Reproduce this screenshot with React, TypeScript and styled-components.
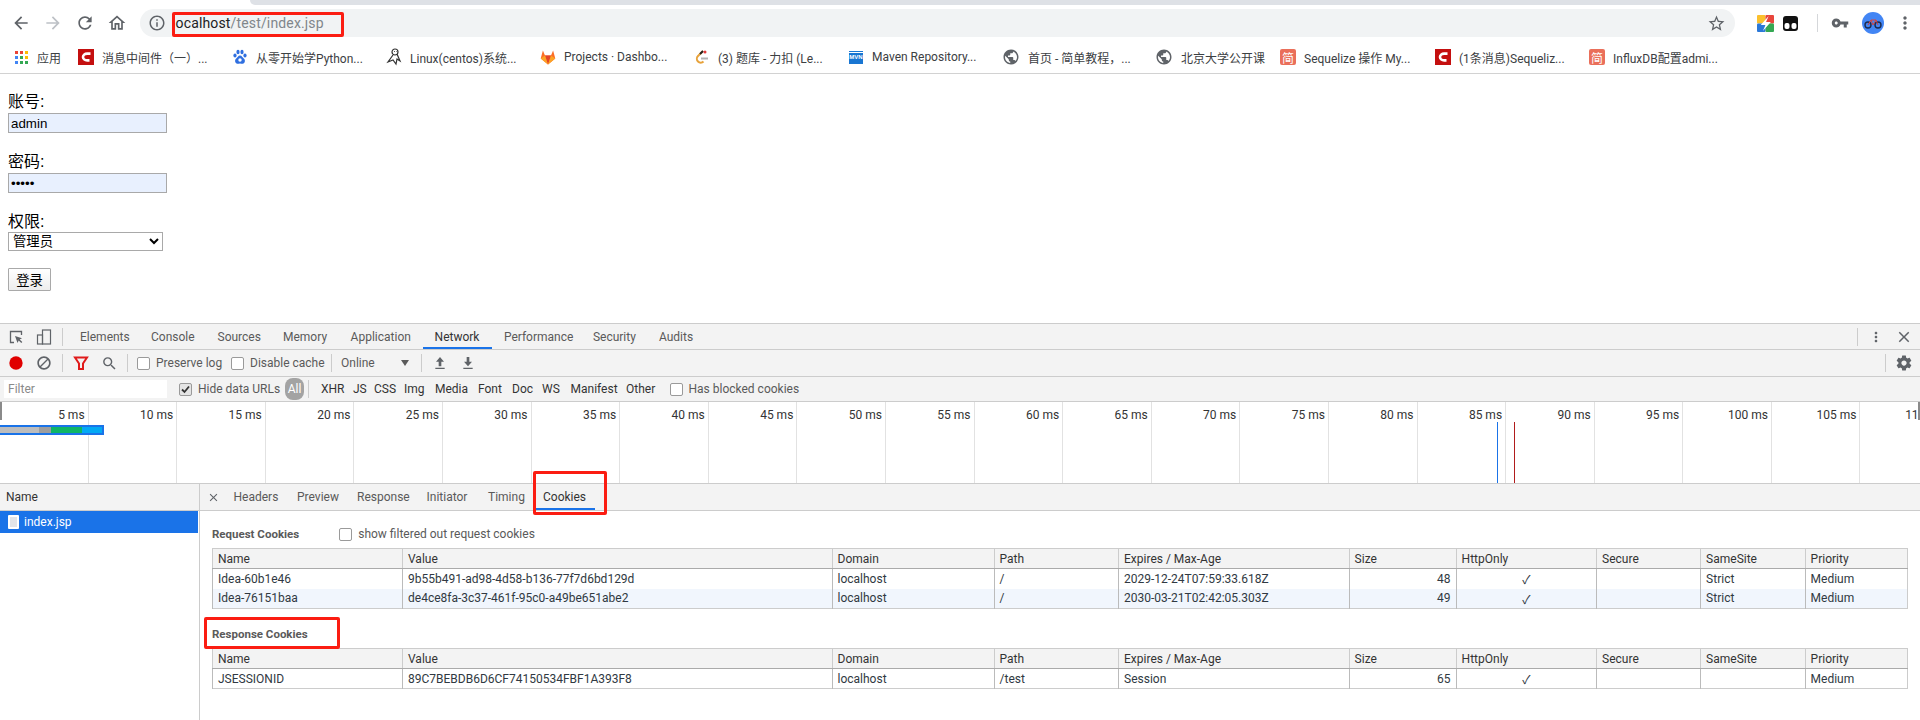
import React from "react";
import styled, { createGlobalStyle } from "styled-components";

const UI_FONT = `Roboto, "Noto Sans CJK SC", sans-serif`;

const paths = {
  back: "M20 11H7.83l5.59-5.59L12 4l-8 8 8 8 1.41-1.41L7.83 13H20v-2z",
  forward: "M12 4l-1.41 1.41L16.17 11H4v2h12.17l-5.58 5.59L12 20l8-8z",
  reload:
    "M17.65 6.35C16.2 4.9 14.21 4 12 4c-4.42 0-7.99 3.58-7.99 8s3.57 8 7.99 8c3.73 0 6.84-2.55 7.73-6h-2.08c-.82 2.33-3.04 4-5.65 4-3.31 0-6-2.69-6-6s2.69-6 6-6c1.66 0 3.14.69 4.22 1.78L13 11h7V4l-2.35 2.35z",
  home: "M12 5.69l5 4.5V18h-2v-6H9v6H7v-7.81l5-4.5M12 3L2 12h3v8h6v-6h2v6h6v-8h3L12 3z",
  info: "M11 7h2v2h-2zm0 4h2v6h-2zm1-9C6.48 2 2 6.48 2 12s4.48 10 10 10 10-4.48 10-10S17.52 2 12 2zm0 18c-4.41 0-8-3.59-8-8s3.59-8 8-8 8 3.59 8 8-3.59 8-8 8z",
  star: "M22 9.24l-7.19-.62L12 2 9.19 8.63 2 9.24l5.46 4.73L5.82 21 12 17.27 18.18 21l-1.63-7.03L22 9.24zM12 15.4l-3.76 2.27 1-4.28-3.32-2.88 4.38-.38L12 6.1l1.71 4.04 4.38.38-3.32 2.88 1 4.28L12 15.4z",
  key: "M12.65 10C11.83 7.67 9.61 6 7 6c-3.31 0-6 2.69-6 6s2.69 6 6 6c2.61 0 4.83-1.67 5.65-4H17v4h4v-4h2v-4H12.65zM7 14c-1.1 0-2-.9-2-2s.9-2 2-2 2 .9 2 2-.9 2-2 2z",
  more: "M12 8c1.1 0 2-.9 2-2s-.9-2-2-2-2 .9-2 2 .9 2 2 2zm0 2c-1.1 0-2 .9-2 2s.9 2 2 2 2-.9 2-2-.9-2-2-2zm0 6c-1.1 0-2 .9-2 2s.9 2 2 2 2-.9 2-2-.9-2-2-2z",
  gear: "M19.43 12.98c.04-.32.07-.64.07-.98s-.03-.66-.07-.98l2.11-1.65c.19-.15.24-.42.12-.64l-2-3.46c-.12-.22-.39-.3-.61-.22l-2.49 1c-.52-.4-1.08-.73-1.69-.98l-.38-2.65C14.46 2.18 14.25 2 14 2h-4c-.25 0-.46.18-.49.42l-.38 2.65c-.61.25-1.17.59-1.69.98l-2.49-1c-.23-.09-.49 0-.61.22l-2 3.46c-.13.22-.07.49.12.64l2.11 1.65c-.04.32-.07.65-.07.98s.03.66.07.98l-2.11 1.65c-.19.15-.24.42-.12.64l2 3.46c.12.22.39.3.61.22l2.49-1c.52.4 1.08.73 1.69.98l.38 2.65c.03.24.24.42.49.42h4c.25 0 .46-.18.49-.42l.38-2.65c.61-.25 1.17-.59 1.69-.98l2.49 1c.23.09.49 0 .61-.22l2-3.46c.12-.22.07-.49-.12-.64l-2.11-1.65zM12 15.5c-1.93 0-3.5-1.57-3.5-3.5s1.57-3.5 3.5-3.5 3.5 1.57 3.5 3.5-1.57 3.5-3.5 3.5z",
  globe:
    "M12 2C6.48 2 2 6.48 2 12s4.48 10 10 10 10-4.48 10-10S17.52 2 12 2zm-1 17.93c-3.95-.49-7-3.85-7-7.93 0-.62.08-1.21.21-1.79L9 15v1c0 1.1.9 2 2 2v1.93zm6.9-2.54c-.26-.81-1-1.39-1.9-1.39h-1v-3c0-.55-.45-1-1-1H8v-2h2c.55 0 1-.45 1-1V7h2c1.1 0 2-.9 2-2v-.41c2.93 1.19 5 4.06 5 7.41 0 2.08-.8 3.97-2.1 5.39z",
  clear:
    "M12 2C6.48 2 2 6.48 2 12s4.48 10 10 10 10-4.48 10-10S17.52 2 12 2zM4.5 12c0-4.14 3.36-7.5 7.5-7.5 1.7 0 3.27.57 4.53 1.52L6.02 16.53A7.46 7.46 0 014.5 12zm7.5 7.5c-1.7 0-3.27-.57-4.53-1.52L17.98 7.47A7.46 7.46 0 0119.5 12c0 4.14-3.36 7.5-7.5 7.5z",
  up: "M12 3l-6 7h4v7h4v-7h4zM5 19h14v2H5z",
  down: "M10 3v7H6l6 7 6-7h-4V3zM5 19h14v2H5z",
  close:
    "M19 6.41L17.59 5 12 10.59 6.41 5 5 6.41 10.59 12 5 17.59 6.41 19 12 13.41 17.59 19 19 17.59 13.41 12z",
  search:
    "M15.5 14h-.79l-.28-.27A6.47 6.47 0 0016 9.5 6.5 6.5 0 109.5 16c1.61 0 3.09-.59 4.23-1.57l.27.28v.79l5 4.99L20.49 19l-4.99-5zm-6 0C7.01 14 5 11.99 5 9.5S7.01 5 9.5 5 14 7.01 14 9.5 11.99 14 9.5 14z",
};

const Glyph = ({ d, size = 20, color = "#5f6368" }: { d: string; size?: number; color?: string }) => (
  <svg width={size} height={size} viewBox="0 0 24 24" fill={color}>
    <path d={d} />
  </svg>
);

const AppsIcon = () => {
  const colors = ["#ea4335", "#ea4335", "#fbbc05", "#4285f4", "#34a853", "#fbbc05", "#4285f4", "#34a853", "#34a853"];
  return (
    <svg width="16" height="16" viewBox="0 0 16 16">
      {colors.map((c, i) => (
        <rect key={i} x={2 + (i % 3) * 5} y={2 + Math.floor(i / 3) * 5} width="3" height="3" fill={c} />
      ))}
    </svg>
  );
};

const CsdnIcon = () => (
  <svg width="16" height="16" viewBox="0 0 16 16">
    <rect width="16" height="16" fill="#c40f0f" />
    <path d="M12.5 4.6H9.2C6.6 4.6 5 6.200 5 8s1.600 3.400 4.200 3.400h2.300" fill="none" stroke="#fff" strokeWidth="2.600" />
  </svg>
);

const BaiduIcon = () => (
  <svg width="16" height="16" viewBox="0 0 16 16" fill="#2f6fe0">
    <ellipse cx="3" cy="6.500" rx="1.600" ry="2" />
    <ellipse cx="6" cy="3" rx="1.600" ry="2.200" />
    <ellipse cx="10" cy="3" rx="1.600" ry="2.200" />
    <ellipse cx="13" cy="6.500" rx="1.600" ry="2" />
    <path d="M8 6.500c-2 0-2.400 2-3.800 3C3 10.500 2.800 12 3.500 13.500 4.300 15 6 15 8 14.500c2 .5 3.700.5 4.500-1 .7-1.500.5-3-.7-4-1.400-1-1.800-3-3.800-3z" />
    <circle cx="8" cy="11" r="1.700" fill="#fff" />
  </svg>
);

const LinuxIcon = () => (
  <svg width="16" height="18" viewBox="0 0 16 18" fill="none" stroke="#333" strokeWidth="1.200">
    <circle cx="9" cy="4" r="3" />
    <path d="M7 7L2 14l5-2 3 4 1-5 3 2-3-7" />
    <path d="M8 3.500h.8M10 3.500h.5" />
  </svg>
);

const GitlabIcon = () => (
  <svg width="16" height="16" viewBox="0 0 16 16">
    <path d="M8 15.500L.7 9.600 2.900 1.500 5 6.500h6l2.100-5 2.200 8.100z" fill="#fc6d26" />
    <path d="M8 15.500L5 6.500h6z" fill="#e24329" />
    <path d="M8 15.500L.7 9.600 5 6.500zM8 15.500l7.300-5.900L11 6.500z" fill="#fca326" />
  </svg>
);

const LeetIcon = () => (
  <svg width="16" height="16" viewBox="0 0 16 16" fill="none" strokeWidth="2">
    <path d="M9 2L4 7c-1.500 1.500-1.500 4 0 5.500s4 1.500 5.500 0" stroke="#e7a23b" />
    <path d="M7 9.500h7" stroke="#b3b3b3" />
    <path d="M9 2L6 5" stroke="#222" />
    <circle cx="11" cy="3" r="1.500" fill="#e23b3b" stroke="none" />
  </svg>
);

const BoltIcon = () => (
  <svg width="17" height="17" viewBox="0 0 16 16">
    <rect width="8" height="8" fill="#fbc02d" rx="1" />
    <rect x="8" width="8" height="8" fill="#e8453c" rx="1" />
    <rect y="8" width="8" height="8" fill="#2b78d8" rx="1" />
    <rect x="8" y="8" width="8" height="8" fill="#34a853" rx="1" />
    <path d="M11 1L3.500 9.500H8L5.500 15 13 6.500H8.500z" fill="#fff" />
  </svg>
);

const MonkeyIcon = () => (
  <svg width="15" height="15" viewBox="0 0 15 15">
    <rect width="15" height="15" rx="3" fill="#111" />
    <rect x="1.500" y="7" width="5" height="6" rx="2" fill="#fff" />
    <rect x="8.500" y="7" width="5" height="6" rx="2" fill="#fff" />
  </svg>
);

const BikeIcon = () => (
  <svg width="18" height="12" viewBox="0 0 18 12" fill="none" stroke="#1d2b4f" strokeWidth="1.400">
    <circle cx="4" cy="8" r="3" />
    <circle cx="14" cy="8" r="3" />
    <path d="M4 8l3-5h5l2 5M7 3l2 5 3-5" stroke="#d9423a" strokeWidth="1" />
  </svg>
);

const InspectIcon = () => (
  <svg width="16" height="16" viewBox="0 0 16 16" fill="none" stroke="#5f6368" strokeWidth="1.300">
    <path d="M6 13.500H2.500v-11h11V6" />
    <path d="M7 7l2.500 7 1.200-2.600 2.600 2.600 1-1-2.600-2.600L14 9.300z" fill="#5f6368" stroke="none" />
  </svg>
);

const DeviceIcon = () => (
  <svg width="16" height="16" viewBox="0 0 16 16" fill="none" stroke="#5f6368" strokeWidth="1.200">
    <rect x="6.500" y="1" width="8" height="14" />
    <rect x="1.500" y="6" width="5" height="9" />
  </svg>
);

const FilterIcon = () => (
  <svg width="16" height="16" viewBox="0 0 16 16" fill="none" stroke="#e01b1b" strokeWidth="2">
    <path d="M2 2.500h12L10 8.500v5.500H6V8.500z" />
  </svg>
);

const FileIcon = () => (
  <svg width="11" height="14" viewBox="0 0 11 14">
    <rect width="11" height="14" rx="1" fill="#fff" />
    <path d="M2 3h7M2 5h7M2 7h7M2 9h7M2 11h7" stroke="#c4c9d2" strokeWidth="1" />
  </svg>
);

const GlobalStyle = createGlobalStyle`
  html, body {
    margin: 0;
    width: 1920px;
    height: 720px;
    overflow: hidden;
    background: #fff;
  }
  * {
    box-sizing: border-box;
  }
`;

const Screen = styled.div`
  position: relative;
  display: flex;
  flex-direction: column;
  width: 1920px;
  height: 720px;
  overflow: hidden;
  font-family: ${UI_FONT};
  font-size: 12px;
  color: #303942;
`;

const TabStrip = styled.div`
  height: 5px;
  padding-left: 250px;
  background: #fff;
`;

const TabStripFill = styled.div`
  height: 100%;
  background: #dee1e6;
  border-bottom-left-radius: 5px;
`;

const ChromeBar = styled.div`
  display: flex;
  align-items: center;
  height: 36px;
  padding: 4px 0 4px 5px;
`;

const NavButton = styled.div`
  display: flex;
  align-items: center;
  justify-content: center;
  flex: 0 0 32px;
  height: 28px;
`;

const Omnibox = styled.div`
  display: flex;
  align-items: center;
  width: 1595px;
  height: 28px;
  margin-left: 7px;
  padding: 0 9px 0 8px;
  background: #f1f3f4;
  border-radius: 14px;
`;

const Url = styled.div`
  flex: 1;
  margin-left: 6px;
  font-size: 14px;
  letter-spacing: 0.15px;
  color: #80868b;
`;

const UrlHost = styled.span`
  color: #202124;
`;

const ExtButton = styled.div<{ $w: number }>`
  display: flex;
  align-items: center;
  justify-content: center;
  flex: 0 0 ${(p) => p.$w}px;
  height: 28px;
`;

const BarDivider = styled.div`
  width: 1px;
  height: 18px;
  background: #d5d7da;
`;

const Avatar = styled.div`
  display: flex;
  align-items: center;
  justify-content: center;
  width: 22px;
  height: 22px;
  border-radius: 50%;
  background: #4285f4;
`;

const Bookmarks = styled.div`
  display: flex;
  align-items: center;
  height: 33px;
  padding-left: 13px;
  border-bottom: 1px solid #d2d2d2;
`;

const Bookmark = styled.div<{ $w: number }>`
  display: flex;
  align-items: center;
  gap: 8px;
  flex: 0 0 ${(p) => p.$w}px;
  font-size: 12px;
  color: #3c4043;
  white-space: nowrap;
  overflow: hidden;
`;

const BookmarkIcon = styled.span`
  display: flex;
  align-items: center;
  justify-content: center;
  flex: 0 0 16px;
  height: 18px;
`;

const MvnBadge = styled.span`
  display: flex;
  align-items: center;
  justify-content: center;
  width: 14px;
  height: 13px;
  border-top: 1px solid #1976d2;
  border-bottom: 1px solid #1976d2;
  font-family: "Liberation Sans", sans-serif;
  font-size: 6px;
  font-weight: 700;
  color: #fff;
  background: linear-gradient(#fff 1px, #1976d2 1px, #1976d2 11px, #fff 11px);
`;

const JianBadge = styled.span`
  display: flex;
  align-items: center;
  justify-content: center;
  width: 16px;
  height: 16px;
  border-radius: 2px;
  background: #ea6f5a;
  color: #fff;
  font-size: 12px;
`;

const MoreBookmarks = styled.svg`
  margin-left: 279px;
`;

const Page = styled.div`
  height: 249px;
  padding: 17px 0 0 8px;
  font-family: "Liberation Sans", "Noto Sans CJK SC", sans-serif;
  color: #000;
`;

const FieldLabel = styled.label`
  display: block;
  height: 22px;
  font-size: 16px;
  line-height: 22px;
`;

const TextInput = styled.input`
  display: block;
  width: 159px;
  height: 20px;
  margin: 0 0 18px;
  padding: 1px 2px;
  border: 1px solid #a9a9a9;
  border-radius: 0;
  background: #e8f0fe;
  font-family: "Liberation Sans", sans-serif;
  font-size: 13.33px;
  color: #000;
  outline: none;
`;

const RoleSelect = styled.select`
  display: block;
  width: 155px;
  height: 19px;
  margin-top: -1px;
  padding: 0;
  border: 1px solid #a9a9a9;
  border-radius: 0;
  background: #fff;
  font-family: "Liberation Sans", "Noto Sans CJK SC", sans-serif;
  font-size: 13.33px;
  color: #000;
`;

const LoginButton = styled.button`
  display: block;
  width: 43px;
  height: 23px;
  margin-top: 17px;
  padding: 0;
  border: 1px solid #a9a9a9;
  border-radius: 1px;
  background: linear-gradient(#fff, #ededed);
  font-family: "Noto Sans CJK SC", sans-serif;
  font-size: 13.33px;
  color: #000;
`;

const DevTools = styled.div`
  display: flex;
  flex-direction: column;
  flex: 1;
  min-height: 0;
  border-top: 1px solid #ccc;
`;

const ToolRow = styled.div<{ $h: number }>`
  display: flex;
  align-items: center;
  flex: 0 0 ${(p) => p.$h}px;
  padding-left: 2px;
  padding-right: 2.5px;
  background: #f3f3f3;
  border-bottom: 1px solid #ccc;
  color: #5a5a5a;
  white-space: nowrap;
`;

const Slot = styled.div`
  display: flex;
  align-items: center;
  justify-content: center;
  flex: 0 0 28px;
  height: 22px;
`;

const Divider = styled.div<{ $push?: boolean }>`
  flex: 0 0 1px;
  height: 18px;
  margin: 0 4px;
  margin-left: ${(p) => (p.$push ? "auto" : "4px")};
  background: #ccc;
`;

const PanelTab = styled.div<{ $w: number; $active?: boolean }>`
  display: flex;
  align-items: center;
  flex: 0 0 ${(p) => p.$w}px;
  height: 100%;
  padding-left: 12px;
  color: ${(p) => (p.$active ? "#333" : "#5a5a5a")};
  box-shadow: ${(p) => (p.$active ? "inset 0 -2px 0 #1a73e8" : "none")};
`;

const PanelTabs = styled.div`
  display: flex;
  height: 100%;
  margin-left: 1px;
`;

const CheckLabel = styled.label<{ $w: number; $ml?: number }>`
  display: flex;
  align-items: center;
  gap: 6px;
  flex: 0 0 ${(p) => p.$w}px;
  margin-left: ${(p) => p.$ml ?? 5}px;
`;

const Check = styled.span<{ $checked?: boolean }>`
  display: flex;
  align-items: center;
  justify-content: center;
  flex: 0 0 13px;
  height: 13px;
  border: 1px solid #9a9a9a;
  border-radius: 2px;
  background: ${(p) => (p.$checked ? "#e4e4e4" : "#fff")};
`;

const Throttle = styled.div`
  display: flex;
  align-items: center;
  justify-content: space-between;
  flex: 0 0 81px;
  padding: 0 8px 0 5px;
`;

const Caret = styled.span`
  width: 0;
  height: 0;
  border-left: 4px solid transparent;
  border-right: 4px solid transparent;
  border-top: 6px solid #5a5a5a;
`;

const FilterInput = styled.div`
  flex: 0 0 163px;
  height: 18px;
  margin-left: 2px;
  padding-left: 4px;
  background: #fff;
  color: #8a8a8a;
  line-height: 19px;
`;

const AllPill = styled.div`
  flex: 0 0 19px;
  height: 22px;
  border-radius: 8px;
  background: #a3a3a3;
  color: #fff;
  text-align: center;
  line-height: 22px;
`;

const TypeFilter = styled.div<{ $w: number }>`
  flex: 0 0 ${(p) => p.$w}px;
  color: #333;
`;

const TypeFilters = styled.div`
  display: flex;
  margin-left: 8px;
`;

const Overview = styled.div`
  position: relative;
  display: flex;
  flex: 0 0 82px;
  overflow: hidden;
  background: #fff;
  border-bottom: 1px solid #ccc;
`;

const Tick = styled.div`
  flex: 0 0 88.6px;
  padding: 5px 3px 0 0;
  border-right: 1px solid #e2e2e2;
  color: #333;
  line-height: 16px;
  text-align: right;
  white-space: nowrap;
`;

const Handle = styled.div<{ $right?: boolean }>`
  position: absolute;
  top: 0;
  ${(p) => (p.$right ? "right: 0;" : "left: 0;")}
  width: 2px;
  height: 18px;
  background: #8a8a8a;
`;

const RequestBar = styled.div`
  position: absolute;
  top: 23px;
  left: 0;
  display: flex;
  width: 104px;
  height: 10px;
  border: 2px solid #1a73e8;
  border-left: 0;
`;

const BarPart = styled.div<{ $w: number; $color: string }>`
  flex: 0 0 ${(p) => p.$w}px;
  background: ${(p) => p.$color};
`;

const EventLine = styled.div<{ $x: number; $color: string }>`
  position: absolute;
  top: 20px;
  bottom: 0;
  left: ${(p) => p.$x}px;
  width: 1px;
  background: ${(p) => p.$color};
`;

const Panels = styled.div`
  display: flex;
  flex: 1;
  min-height: 0;
`;

const RequestList = styled.div`
  flex: 0 0 200px;
  border-right: 1px solid #ccc;
`;

const ListHead = styled.div`
  display: flex;
  align-items: center;
  height: 27px;
  padding-left: 6px;
  padding-bottom: 1px;
  background: #f3f3f3;
  border-bottom: 1px solid #ccc;
  color: #333;
`;

const ListRow = styled.div`
  display: flex;
  align-items: center;
  gap: 5px;
  height: 22px;
  margin-right: 1px;
  padding-left: 8px;
  background: #1a73e8;
  color: #fff;
`;

const Detail = styled.div`
  flex: 1;
  min-width: 0;
`;

const DetailTabs = styled.div`
  display: flex;
  align-items: center;
  height: 27px;
  background: #f3f3f3;
  border-bottom: 1px solid #ccc;
`;

const CloseSlot = styled.div`
  display: flex;
  align-items: center;
  flex: 0 0 25.5px;
  padding-left: 7px;
`;

const DetailTab = styled.div<{ $w: number; $active?: boolean }>`
  display: flex;
  align-items: center;
  flex: 0 0 ${(p) => p.$w}px;
  height: 100%;
  padding-left: 8px;
  color: ${(p) => (p.$active ? "#333" : "#5a5a5a")};
  box-shadow: ${(p) => (p.$active ? "inset 0 -2px 0 #1a73e8" : "none")};
`;

const CookieBody = styled.div`
  padding: 0 13px 0 12px;
`;

const SectionHead = styled.div<{ $pt: number }>`
  display: flex;
  align-items: center;
  height: 22px;
  margin: ${(p) => p.$pt}px 0 3px;
  font-weight: 700;
  font-size: 11.5px;
  color: #5a5a5a;
`;

const SectionOption = styled.label`
  display: flex;
  align-items: center;
  gap: 6px;
  margin-left: 40px;
  font-weight: 400;
  font-size: 12px;
  color: #5a5a5a;
`;

const CookieTable = styled.table`
  width: 695px;
  width: 100%;
  border: 1px solid #ccc;
  border-collapse: collapse;
  table-layout: fixed;
`;

const HeadCell = styled.th`
  height: 20px;
  padding: 0 5px;
  background: #f3f3f3;
  border-left: 1px solid #ccc;
  border-bottom: 1px solid #aaa;
  font-weight: 400;
  text-align: left;
  color: #333;
`;

const BodyRow = styled.tr<{ $alt?: boolean }>`
  background: ${(p) => (p.$alt ? "#f1f6fd" : "#fff")};
`;

const BodyCell = styled.td<{ $align?: string }>`
  height: 20px;
  padding: 0 5px;
  border-left: 1px solid #bbb;
  text-align: ${(p) => p.$align ?? "left"};
  color: #303942;
  white-space: nowrap;
  overflow: hidden;
`;

const Mark = styled.div<{ $x: number; $y: number; $w: number; $h: number }>`
  position: absolute;
  left: ${(p) => p.$x}px;
  top: ${(p) => p.$y}px;
  width: ${(p) => p.$w}px;
  height: ${(p) => p.$h}px;
  border: 3px solid #fb1d12;
  border-radius: 2px;
  pointer-events: none;
`;

const bookmarks: { label: string; w: number; icon: React.ReactNode }[] = [
  { label: "应用", w: 65, icon: <AppsIcon /> },
  { label: "消息中间件（一）...", w: 154, icon: <CsdnIcon /> },
  { label: "从零开始学Python...", w: 154, icon: <BaiduIcon /> },
  { label: "Linux(centos)系统...", w: 154, icon: <LinuxIcon /> },
  { label: "Projects · Dashbo...", w: 154, icon: <GitlabIcon /> },
  { label: "(3) 题库 - 力扣 (Le...", w: 154, icon: <LeetIcon /> },
  { label: "Maven Repository...", w: 154, icon: <MvnBadge>MVN</MvnBadge> },
  { label: "首页 - 简单教程，...", w: 153, icon: <Glyph d={paths.globe} size={18} /> },
  { label: "北京大学公开课", w: 125, icon: <Glyph d={paths.globe} size={18} /> },
  { label: "Sequelize 操作 My...", w: 155, icon: <JianBadge>简</JianBadge> },
  { label: "(1条消息)Sequeliz...", w: 154, icon: <CsdnIcon /> },
  { label: "InfluxDB配置admi...", w: 154, icon: <JianBadge>简</JianBadge> },
];

const panelTabs = [
  { label: "Elements", w: 71 },
  { label: "Console", w: 66.5 },
  { label: "Sources", w: 65.5 },
  { label: "Memory", w: 67.6 },
  { label: "Application", w: 84 },
  { label: "Network", w: 69.3, active: true },
  { label: "Performance", w: 89 },
  { label: "Security", w: 66 },
  { label: "Audits", w: 60 },
];

const typeFilters = [
  { label: "XHR", w: 32 },
  { label: "JS", w: 21 },
  { label: "CSS", w: 30 },
  { label: "Img", w: 31 },
  { label: "Media", w: 43 },
  { label: "Font", w: 34 },
  { label: "Doc", w: 30 },
  { label: "WS", w: 28.5 },
  { label: "Manifest", w: 55.5 },
  { label: "Other", w: 43.5 },
];

const detailTabs = [
  { label: "Headers", w: 63.5 },
  { label: "Preview", w: 60 },
  { label: "Response", w: 69.5 },
  { label: "Initiator", w: 61.5 },
  { label: "Timing", w: 55 },
  { label: "Cookies", w: 60, active: true },
];

const columns = [
  { label: "Name", w: 190 },
  { label: "Value", w: 429.5 },
  { label: "Domain", w: 162 },
  { label: "Path", w: 124.5 },
  { label: "Expires / Max-Age", w: 230.6 },
  { label: "Size", w: 107, align: "right" },
  { label: "HttpOnly", w: 140.5, align: "center" },
  { label: "Secure", w: 104 },
  { label: "SameSite", w: 104.5 },
  { label: "Priority", w: 102.5 },
];

const requestCookies = [
  ["Idea-60b1e46", "9b55b491-ad98-4d58-b136-77f7d6bd129d", "localhost", "/", "2029-12-24T07:59:33.618Z", "48", "✓", "", "Strict", "Medium"],
  ["Idea-76151baa", "de4ce8fa-3c37-461f-95c0-a49be651abe2", "localhost", "/", "2030-03-21T02:42:05.303Z", "49", "✓", "", "Strict", "Medium"],
];

const responseCookies = [
  ["JSESSIONID", "89C7BEBDB6D6CF74150534FBF1A393F8", "localhost", "/test", "Session", "65", "✓", "", "", "Medium"],
];

const Table = ({ rows }: { rows: string[][] }) => (
  <CookieTable>
    <colgroup>
      {columns.map((c) => (
        <col key={c.label} style={{ width: c.w }} />
      ))}
    </colgroup>
    <thead>
      <tr>
        {columns.map((c) => (
          <HeadCell key={c.label}>{c.label}</HeadCell>
        ))}
      </tr>
    </thead>
    <tbody>
      {rows.map((row, i) => (
        <BodyRow key={row[0]} $alt={i % 2 === 1}>
          {row.map((cell, j) => (
            <BodyCell key={j} $align={columns[j].align}>
              {cell}
            </BodyCell>
          ))}
        </BodyRow>
      ))}
    </tbody>
  </CookieTable>
);

const ticks = Array.from({ length: 22 }, (_, i) => (i + 1) * 5);

export default function App() {
  return (
    <Screen>
      <GlobalStyle />
      <TabStrip>
        <TabStripFill />
      </TabStrip>
      <ChromeBar>
        <NavButton><Glyph d={paths.back} /></NavButton>
        <NavButton><Glyph d={paths.forward} color="#bdc1c6" /></NavButton>
        <NavButton><Glyph d={paths.reload} /></NavButton>
        <NavButton><Glyph d={paths.home} /></NavButton>
        <Omnibox>
          <Glyph d={paths.info} size={18} />
          <Url>
            <UrlHost>localhost</UrlHost>/test/index.jsp
          </Url>
          <Glyph d={paths.star} size={19} />
        </Omnibox>
        <ExtButton $w={22} />
        <ExtButton $w={0}><BoltIcon /></ExtButton>
        <ExtButton $w={32}><MonkeyIcon /></ExtButton>
        <ExtButton $w={23}><BarDivider /></ExtButton>
        <ExtButton $w={22}><Glyph d={paths.key} size={18} /></ExtButton>
        <ExtButton $w={43}><Avatar><BikeIcon /></Avatar></ExtButton>
        <ExtButton $w={22}><Glyph d={paths.more} size={20} /></ExtButton>
      </ChromeBar>
      <Bookmarks>
        {bookmarks.map((b) => (
          <Bookmark key={b.label} $w={b.w}>
            <BookmarkIcon>{b.icon}</BookmarkIcon>
            {b.label}
          </Bookmark>
        ))}
        <MoreBookmarks width="12" height="12" viewBox="0 0 12 12" fill="none" stroke="#5f6368" strokeWidth="1.500">
          <path d="M2 2l4 4-4 4M7 2l4 4-4 4" />
        </MoreBookmarks>
      </Bookmarks>
      <Page>
        <FieldLabel>账号:</FieldLabel>
        <TextInput type="text" defaultValue="admin" readOnly />
        <FieldLabel>密码:</FieldLabel>
        <TextInput type="password" defaultValue="admin" readOnly />
        <FieldLabel>权限:</FieldLabel>
        <RoleSelect defaultValue="admin">
          <option value="admin">管理员</option>
        </RoleSelect>
        <LoginButton>登录</LoginButton>
      </Page>
      <DevTools>
        <ToolRow $h={26}>
          <Slot><InspectIcon /></Slot>
          <Slot><DeviceIcon /></Slot>
          <Divider />
          <PanelTabs>
            {panelTabs.map((t) => (
              <PanelTab key={t.label} $w={t.w} $active={t.active}>{t.label}</PanelTab>
            ))}
          </PanelTabs>
          <Divider $push />
          <Slot><Glyph d={paths.more} size={16} /></Slot>
          <Slot><Glyph d={paths.close} size={18} /></Slot>
        </ToolRow>
        <ToolRow $h={27}>
          <Slot><Glyph d="M12 4a8 8 0 100 16 8 8 0 000-16z" color="#e00000" size={20} /></Slot>
          <Slot><Glyph d={paths.clear} size={16} /></Slot>
          <Divider />
          <Slot><FilterIcon /></Slot>
          <Slot><Glyph d={paths.search} size={17} /></Slot>
          <Divider />
          <CheckLabel $w={89}><Check />Preserve log</CheckLabel>
          <CheckLabel $w={96}><Check />Disable cache</CheckLabel>
          <Divider />
          <Throttle>Online<Caret /></Throttle>
          <Divider />
          <Slot><Glyph d={paths.up} size={16} /></Slot>
          <Slot><Glyph d={paths.down} size={16} /></Slot>
          <Divider $push />
          <Slot><Glyph d={paths.gear} size={18} /></Slot>
        </ToolRow>
        <ToolRow $h={25}>
          <FilterInput>Filter</FilterInput>
          <CheckLabel $w={106} $ml={12}>
            <Check $checked>
              <svg width="9" height="9" viewBox="0 0 9 9" fill="none" stroke="#333" strokeWidth="1.800">
                <path d="M1 4.500l2.500 2.500L8 1.500" />
              </svg>
            </Check>
            Hide data URLs
          </CheckLabel>
          <AllPill>All</AllPill>
          <Divider />
          <TypeFilters>
            {typeFilters.map((t) => (
              <TypeFilter key={t.label} $w={t.w}>{t.label}</TypeFilter>
            ))}
          </TypeFilters>
          <CheckLabel $w={130} $ml={0}><Check />Has blocked cookies</CheckLabel>
        </ToolRow>
        <Overview>
          {ticks.map((t) => (
            <Tick key={t}>{t} ms</Tick>
          ))}
          <Handle />
          <Handle $right />
          <RequestBar>
            <BarPart $w={39} $color="#bdbdbd" />
            <BarPart $w={12} $color="#9e9e9e" />
            <BarPart $w={31} $color="#0fb565" />
            <BarPart $w={20} $color="#03a9f4" />
          </RequestBar>
          <EventLine $x={1497} $color="#1a73e8" />
          <EventLine $x={1514} $color="#b01b1b" />
        </Overview>
        <Panels>
          <RequestList>
            <ListHead>Name</ListHead>
            <ListRow><FileIcon />index.jsp</ListRow>
          </RequestList>
          <Detail>
            <DetailTabs>
              <CloseSlot><Glyph d={paths.close} size={13} /></CloseSlot>
              {detailTabs.map((t) => (
                <DetailTab key={t.label} $w={t.w} $active={t.active}>{t.label}</DetailTab>
              ))}
            </DetailTabs>
            <CookieBody>
              <SectionHead $pt={12}>
                Request Cookies
                <SectionOption><Check />show filtered out request cookies</SectionOption>
              </SectionHead>
              <Table rows={requestCookies} />
              <SectionHead $pt={14}>Response Cookies</SectionHead>
              <Table rows={responseCookies} />
            </CookieBody>
          </Detail>
        </Panels>
      </DevTools>
      <Mark $x={172} $y={12} $w={172} $h={25} />
      <Mark $x={533} $y={471} $w={74} $h={44} />
      <Mark $x={204} $y={617} $w={136} $h={32} />
    </Screen>
  );
}
